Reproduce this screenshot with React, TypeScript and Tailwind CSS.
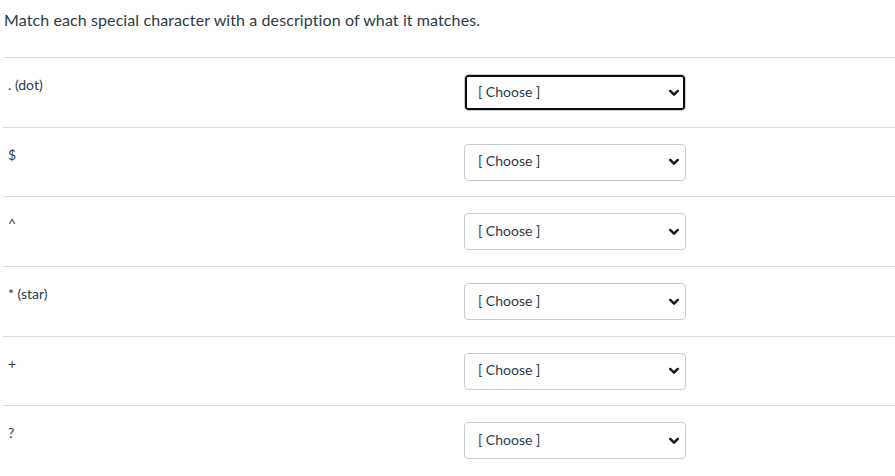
import { useState } from 'react';

const items = ['. (dot)', '$', '^', '* (star)', '+', '?'];

function Chevron() {
  return (
    <svg
      className="pointer-events-none absolute right-[7px] top-1/2 -translate-y-1/2"
      width="10"
      height="7"
      viewBox="0 0 10 7"
    >
      <path d="M1.2 1.3 L5 5.2 L8.8 1.3" fill="none" stroke="#111a22" strokeWidth="2.4" strokeLinecap="round" strokeLinejoin="round" />
    </svg>
  );
}

export default function App() {
  const [answers, setAnswers] = useState<string[]>(items.map(() => ''));

  return (
    <div className="w-[895px] h-[476px] overflow-hidden bg-white text-[#2d3b45] font-['Lato','Liberation_Sans',sans-serif]">
      <p className="pl-[4px] pt-[8px] h-[57px] text-[16px] tracking-[0.1px] leading-6">
        Match each special character with a description of what it matches.
      </p>

      <div className="ml-[3px]">
        {items.map((item, i) => (
          <div key={item} className="flex h-[69.7px] border-t border-[#dcdcdc]">
            {/* 문자 */}
            <div className="w-[461px] pl-[5px] pt-[17px] text-[14px] leading-5">{item}</div>

            {/* 선택 */}
            <div className="relative mt-[16px] h-[37px] w-[222px]">
              <select
                value={answers[i]}
                onChange={(e) => {
                  const next = [...answers];
                  next[i] = e.target.value;
                  setAnswers(next);
                }}
                className={`h-full w-full appearance-none rounded-[4px] border border-[#c7cdd1] bg-white pl-[13px] pb-[3px] text-[14px] text-[#2d3b45] outline-none ${
                  i === 0 ? 'shadow-[inset_0_0_0_2px_#0d0d0d]' : ''
                }`}
              >
                <option value="">[ Choose ]</option>
                <option value="any">Any single character</option>
                <option value="end">End of line</option>
                <option value="start">Start of line</option>
                <option value="zero">Zero or more</option>
                <option value="one">One or more</option>
                <option value="opt">Zero or one</option>
              </select>
              <Chevron />
            </div>
          </div>
        ))}
      </div>
    </div>
  );
}
